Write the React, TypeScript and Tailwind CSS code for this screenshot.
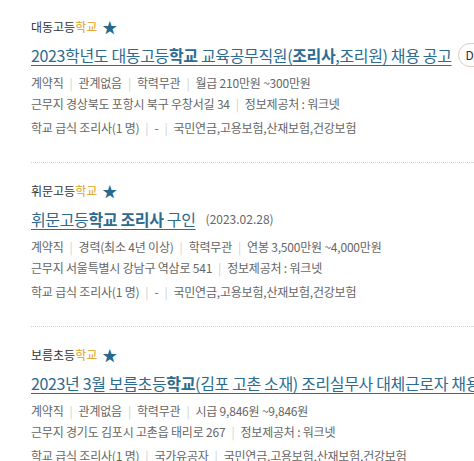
import { Fragment } from 'react'

type Job = {
  company: string
  title: { text: string; bold?: boolean }[]
  date?: string
  badge?: string
  info1: string[]
  info2: string[]
  info3: string[]
}

const jobs: Job[] = [
  {
    company: '대동고등',
    title: [
      { text: '2023학년도 대동고등' },
      { text: '학교', bold: true },
      { text: ' 교육공무직원(' },
      { text: '조리사', bold: true },
      { text: ',조리원) 채용 공고' },
    ],
    badge: 'D-7',
    info1: ['계약직', '관계없음', '학력무관', '월급 210만원 ~300만원'],
    info2: ['근무지 경상북도 포항시 북구 우창서길 34', '정보제공처 : 워크넷'],
    info3: ['학교 급식 조리사(1 명)', '-', '국민연금,고용보험,산재보험,건강보험'],
  },
  {
    company: '휘문고등',
    title: [
      { text: '휘문고등' },
      { text: '학교', bold: true },
      { text: ' ' },
      { text: '조리사', bold: true },
      { text: ' 구인' },
    ],
    date: '(2023.02.28)',
    info1: ['계약직', '경력(최소 4년 이상)', '학력무관', '연봉 3,500만원 ~4,000만원'],
    info2: ['근무지 서울특별시 강남구 역삼로 541', '정보제공처 : 워크넷'],
    info3: ['학교 급식 조리사(1 명)', '-', '국민연금,고용보험,산재보험,건강보험'],
  },
  {
    company: '보름초등',
    title: [
      { text: '2023년 3월 보름초등' },
      { text: '학교', bold: true },
      { text: '(김포 고촌 소재) 조리실무사 대체근로자 채용 공고' },
    ],
    info1: ['계약직', '관계없음', '학력무관', '시급 9,846원 ~9,846원'],
    info2: ['근무지 경기도 김포시 고촌읍 태리로 267', '정보제공처 : 워크넷'],
    info3: ['학교 급식 조리사(1 명)', '국가유공자', '국민연금,고용보험,산재보험,건강보험'],
  },
]

function InfoLine({ items, className }: { items: string[]; className?: string }) {
  return (
    <div className={`text-[12px] tracking-[-0.2px] text-[#666] whitespace-nowrap ${className ?? ''}`}>
      {items.map((it, i) => (
        <Fragment key={i}>
          {i > 0 && <span className="text-[#d0d0d0] mx-[6px]">|</span>}
          {it}
        </Fragment>
      ))}
    </div>
  )
}

export default function App() {
  return (
    <div
      className="w-[474px] h-[461px] overflow-hidden bg-white"
      style={{ fontFamily: '"Noto Sans CJK KR", "Noto Sans", sans-serif' }}
    >
      <div className="ml-[31px]">
        {jobs.map((job, idx) => (
          <div
            key={idx}
            className={`${idx === 0 ? 'pt-[18px]' : 'pt-[19px]'} pb-[24px] border-b border-dotted border-[#cfcfcf]`}
          >
            {/* 회사명 */}
            <div className="h-[18px] leading-[18px] text-[12px] text-[#333] flex items-center whitespace-nowrap">
              {job.company}
              <span className="text-[#e0a21c]">학교</span>
              <span className="text-[#236a8e] text-[15px] ml-[5px]">★</span>
            </div>

            {/* 공고 제목 */}
            <div className="mt-[7px] h-[24px] flex items-center whitespace-nowrap">
              <a className="text-[16px] tracking-[-0.35px] text-[#2d6b8f] underline underline-offset-[3px] decoration-[1px]">
                {job.title.map((t, i) =>
                  t.bold ? (
                    <b key={i} className="font-bold">{t.text}</b>
                  ) : (
                    <span key={i}>{t.text}</span>
                  )
                )}
              </a>
              {job.date && (
                <span className="ml-[10px] text-[12px] text-[#666]">{job.date}</span>
              )}
              {job.badge && (
                <span className="ml-[6px] h-[24px] px-[7px] rounded-full border border-[#d9cfbd] text-[12px] text-[#333] flex items-center">
                  {job.badge}
                </span>
              )}
            </div>

            <InfoLine items={job.info1} className="mt-[5px] leading-[21px]" />
            <InfoLine items={job.info2} className="leading-[21px]" />
            <InfoLine items={job.info3} className="mt-[4px] leading-[20px]" />
          </div>
        ))}
      </div>
    </div>
  )
}
